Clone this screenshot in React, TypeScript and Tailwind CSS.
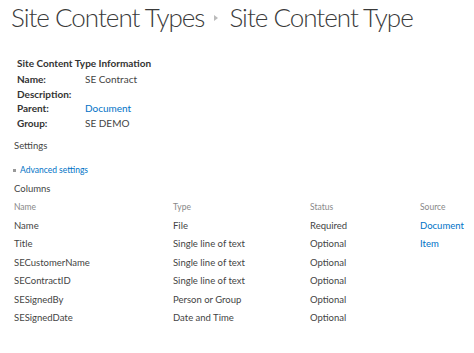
import React from "react";

const rows = [
  { name: "Name", type: "File", status: "Required", source: "Document" },
  { name: "Title", type: "Single line of text", status: "Optional", source: "Item" },
  { name: "SECustomerName", type: "Single line of text", status: "Optional", source: "" },
  { name: "SEContractID", type: "Single line of text", status: "Optional", source: "" },
  { name: "SESignedBy", type: "Person or Group", status: "Optional", source: "" },
  { name: "SESignedDate", type: "Date and Time", status: "Optional", source: "" },
];

const info = [
  { label: "Name:", value: "SE Contract", link: false },
  { label: "Description:", value: "", link: false },
  { label: "Parent:", value: "Document", link: true },
  { label: "Group:", value: "SE DEMO", link: false },
];

export default function App() {
  return (
    <div
      className="w-[474px] h-[353px] bg-white overflow-hidden text-[#444]"
      style={{ fontFamily: 'Lato, "Open Sans", sans-serif' }}
    >
      {/* Page title */}
      <div className="flex items-center h-[33px] pl-[11px] text-[26px] font-light tracking-[-1px] text-[#3a3a3a] leading-none whitespace-nowrap">
        <span>Site Content Types</span>
        <span className="ml-[10px] mr-[11px] mt-[2px] w-0 h-0 border-y-[3px] border-y-transparent border-l-[4px] border-l-[#bbb]" />
        <span>Site Content Type</span>
      </div>

      {/* Info */}
      <div className="pl-[17px] pt-[23px]">
        <div className="h-[14px] leading-[14px] text-[10px] font-bold text-[#333]">Site Content Type Information</div>
        <div className="pt-[2px]">
          {info.map((r) => (
            <div key={r.label} className="flex h-[14.6px] leading-[14.6px] text-[10px]">
              <div className="w-[68px] font-bold text-[#333]">{r.label}</div>
              <div className={r.link ? "text-[#0072c6]" : "text-[#444]"}>{r.value}</div>
            </div>
          ))}
        </div>
      </div>

      {/* Settings */}
      <div className="pl-[14px] pt-[8px] text-[9.5px] leading-[16px] text-[#444]">Settings</div>
      <div className="flex items-center pl-[13px] pt-[8px] h-[24px] text-[8.5px] text-[#0072c6]">
        <span className="w-[3px] h-[3px] bg-[#999] mr-[4px]" />
        <span>Advanced settings</span>
      </div>
      <div className="pl-[14px] h-[18px] leading-[18px] pt-[2px] text-[9.5px] text-[#444]">Columns</div>

      {/* Columns table */}
      <div className="pl-[14px] pt-[1px]">
        <div className="grid grid-cols-[159px_137px_110px_1fr] h-[19px] items-center text-[8.5px] text-[#888]">
          <div>Name</div>
          <div>Type</div>
          <div>Status</div>
          <div>Source</div>
        </div>
        {rows.map((r) => (
          <div
            key={r.name}
            className="grid grid-cols-[159px_137px_110px_1fr] h-[18.5px] items-center text-[9.5px] text-[#444]"
          >
            <div>{r.name}</div>
            <div>{r.type}</div>
            <div>{r.status}</div>
            <div className="text-[#0072c6]">{r.source}</div>
          </div>
        ))}
      </div>
    </div>
  );
}
